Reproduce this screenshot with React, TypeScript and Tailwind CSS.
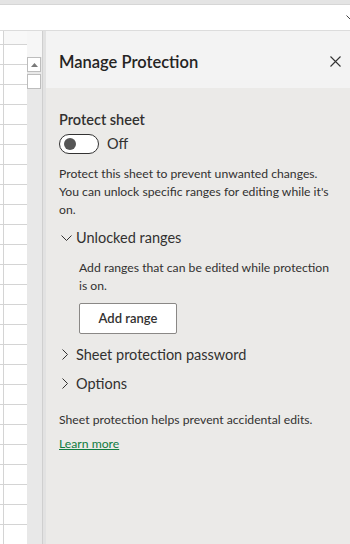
const font = { fontFamily: 'Lato, "Segoe UI", "Noto Sans", sans-serif' };

function GridColumn() {
  const rows = Array.from({ length: 25 });
  return (
    <div className="w-[27px] flex flex-col bg-white">
      <div className="h-[26px] border-l border-[#d4d4d4] ml-[3px] bg-[#f8f8f8]" />
      {rows.map((_, i) => (
        <div key={i} className="h-[20px] shrink-0 border-t border-[#d4d4d4] flex">
          <div className="w-[3px]" />
          <div className="flex-1 border-l border-[#d4d4d4]" />
        </div>
      ))}
    </div>
  );
}

function Scrollbar() {
  return (
    <div className="w-[15px] flex flex-col bg-[#e8e8e8]">
      <div className="h-[26px] bg-[#f6f6f6]" />
      <div className="h-[15px] w-[14px] bg-white border border-[#bdbdbd] flex items-center justify-center">
        <svg width="7" height="4" viewBox="0 0 7 4">
          <polygon points="3.5,0 7,4 0,4" fill="#7a7a7a" />
        </svg>
      </div>
      <div className="h-[15px] w-[14px] mt-[2px] bg-white border border-[#bdbdbd]" />
    </div>
  );
}

function Down() {
  return (
    <svg width="11" height="6" viewBox="0 0 11 6" className="ml-[2px]">
      <polyline points="0.5,0.5 5.5,5.5 10.5,0.5" fill="none" stroke="#323130" strokeWidth="1" />
    </svg>
  );
}

function Right() {
  return (
    <svg width="6" height="11" viewBox="0 0 6 11" className="ml-[3px]">
      <polyline points="0.5,0.5 5.5,5.5 0.5,10.5" fill="none" stroke="#323130" strokeWidth="1" />
    </svg>
  );
}

function Section({ open, label }: { open?: boolean; label: string }) {
  return (
    <div className="flex items-center h-[20px]">
      <div className="w-[17px] flex items-center">{open ? <Down /> : <Right />}</div>
      <span className="text-[14.5px]">{label}</span>
    </div>
  );
}

export default function App() {
  return (
    <div className="w-[350px] h-[544px] overflow-hidden flex flex-col bg-white text-[#323130]" style={font}>
      <div className="h-[5px] bg-[#e4e4e4] border-b border-[#d6d6d6]" />
      <div className="h-[26px] bg-white border-b border-[#dcdcdc] flex items-center justify-end">
        <svg width="8" height="5" viewBox="0 0 8 5" className="mr-[-4px]">
          <polyline points="0.5,0.5 4,4 7.5,0.5" fill="none" stroke="#444" strokeWidth="1" />
        </svg>
      </div>
      <div className="flex flex-1 min-h-0">
        <GridColumn />
        <Scrollbar />
        <div className="w-[1px] bg-[#cfcfcf]" />
        <div className="w-[3px] bg-[#e2e2e2]" />
        <div className="flex-1 flex flex-col">
          <div className="h-[57px] bg-[#f3f3f3] flex items-center justify-between pl-[13px] pr-[9px]">
            <h1 className="text-[16.5px] font-semibold text-[#252423] leading-none mt-[5px]">Manage Protection</h1>
            <svg width="11" height="11" viewBox="0 0 11 11" className="mt-[4px]">
              <path d="M0.5 0.5 L10.5 10.5 M10.5 0.5 L0.5 10.5" stroke="#333" strokeWidth="1.1" fill="none" />
            </svg>
          </div>
          <div className="flex-1 bg-[#ebeae8] pl-[13px] pr-[10px] pt-[22px]">
            <h2 className="text-[14.5px] font-semibold leading-[20px]">Protect sheet</h2>
            <div className="flex items-center gap-[8px] mt-[3px]">
              <div className="w-[40px] h-[20px] rounded-full border border-[#333] bg-white flex items-center pl-[4px]">
                <div className="w-[12px] h-[12px] rounded-full bg-[#555]" />
              </div>
              <span className="text-[14.5px]">Off</span>
            </div>
            <p className="text-[12.2px] leading-[18px] mt-[10px]">
              Protect this sheet to prevent unwanted changes. You can unlock specific ranges for editing while it's on.
            </p>
            <div className="mt-[9px]">
              <Section open label="Unlocked ranges" />
            </div>
            <div className="pl-[20px] mt-[11px]">
              <p className="text-[12.2px] leading-[18px]">Add ranges that can be edited while protection is on.</p>
              <button className="mt-[8px] w-[98px] h-[31px] bg-white border border-[#8a8886] rounded-[2px] text-[13px] font-semibold">
                Add range
              </button>
            </div>
            <div className="mt-[11px]">
              <Section label="Sheet protection password" />
            </div>
            <div className="mt-[9px]">
              <Section label="Options" />
            </div>
            <p className="text-[12.2px] leading-[18px] mt-[17px]">Sheet protection helps prevent accidental edits.</p>
            <a className="block text-[12.2px] leading-[18px] mt-[6px] text-[#107c41] underline">Learn more</a>
          </div>
        </div>
      </div>
    </div>
  );
}
